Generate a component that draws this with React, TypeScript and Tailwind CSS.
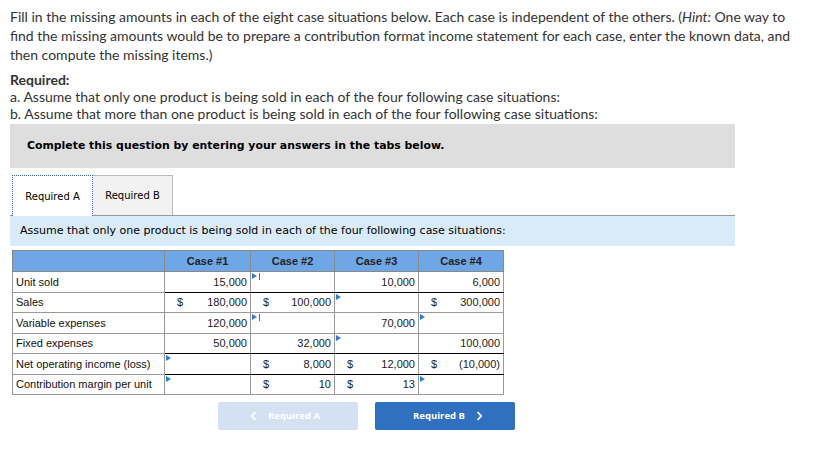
import React from "react";

type Cell = { v?: string; d?: boolean; m?: "flag" | "bar" };

const rows: { label: string; cells: Cell[]; line: string }[] = [
  { label: "Unit sold", cells: [{ v: "15,000" }, { m: "bar" }, { v: "10,000" }, { v: "6,000" }], line: "border-b-black" },
  { label: "Sales", cells: [{ v: "180,000", d: true }, { v: "100,000", d: true }, { m: "flag" }, { v: "300,000", d: true }], line: "border-b-[#9a9a9a]" },
  { label: "Variable expenses", cells: [{ v: "120,000" }, { m: "bar" }, { v: "70,000" }, { m: "flag" }], line: "border-b-[#9a9a9a]" },
  { label: "Fixed expenses", cells: [{ v: "50,000" }, { v: "32,000" }, { m: "flag" }, { v: "100,000" }], line: "border-b-black" },
  { label: "Net operating income (loss)", cells: [{ m: "flag" }, { v: "8,000", d: true }, { v: "12,000", d: true }, { v: "(10,000)", d: true }], line: "border-b-black" },
  { label: "Contribution margin per unit", cells: [{ m: "flag" }, { v: "10", d: true }, { v: "13", d: true }, { m: "flag" }], line: "border-b-[#9a9a9a]" },
];

function Marker({ kind }: { kind: "flag" | "bar" }) {
  return (
    <svg className="absolute left-0 top-0" width="10" height="9" viewBox="0 0 10 9">
      <path d="M1 1 L6 4 L1 7 Z" fill="#2f7bd8" />
      {kind === "bar" && <rect x="8" y="1" width="1" height="7" fill="#2f7bd8" />}
    </svg>
  );
}

function Chevron({ dir }: { dir: "left" | "right" }) {
  return (
    <svg width="7" height="10" viewBox="0 0 7 10">
      <path d={dir === "left" ? "M5.5 1 L1.8 5 L5.5 9" : "M1.5 1 L5.2 5 L1.5 9"} fill="none" stroke="white" strokeWidth="1.8" />
    </svg>
  );
}

export default function App() {
  return (
    <div className="w-[813px] h-[450px] bg-white text-[#333] relative">
      <div className="px-[10px] pt-[7px] font-['Lato',sans-serif] text-[14px] leading-[19px] text-[#333]">
        <p>
          Fill in the missing amounts in each of the eight case situations below. Each case is independent of the others. (<i>Hint:</i> One way to find the missing amounts would be to prepare a contribution format income statement for each case, enter the known data, and then compute the missing items.)
        </p>
        <p className="mt-[7px] font-bold leading-[17px]">Required:</p>
        <p className="leading-[17px]">a. Assume that only one product is being sold in each of the four following case situations:</p>
        <p className="leading-[17px]">b. Assume that more than one product is being sold in each of the four following case situations:</p>
      </div>

      <div className="ml-[10px] mt-[2px] w-[725px] h-[44px] bg-[#dedede] flex items-center px-[17px] font-['DejaVu_Sans',Verdana,sans-serif] text-[10.9px] font-bold text-black">
        Complete this question by entering your answers in the tabs below.
      </div>

      <div className="ml-[10px] mt-[7px] w-[725px] flex items-end border-b border-[#999] h-[41px] font-['DejaVu_Sans',Verdana,sans-serif] text-[10px] text-black">
        <div className="ml-[2px] w-[81px] h-[41px] -mb-px bg-white border border-dotted border-[#3a5fa8] border-b-0 flex items-center justify-center">
          Required A
        </div>
        <div className="w-[80px] h-[40px] bg-[#f2f2f2] border border-[#bbb] border-b-0 border-l-0 flex items-center justify-center">
          Required B
        </div>
      </div>

      <div className="ml-[10px] w-[725px] h-[30px] bg-[#d9ebf9] flex items-center px-[10px] font-['DejaVu_Sans',Verdana,sans-serif] text-[11px] text-black">
        Assume that only one product is being sold in each of the four following case situations:
      </div>

      <table className="ml-[12px] mt-[4px] border-collapse font-['Liberation_Sans',Arial,sans-serif] text-[11px] text-black">
        <thead>
          <tr className="h-[21px] bg-[#6fa7e6]">
            <th className="w-[152px] border border-[#888]"></th>
            {["Case #1", "Case #2", "Case #3", "Case #4"].map((c, i) => (
              <th key={c} className={`${i === 3 ? "w-[85px]" : i === 0 ? "w-[86px]" : "w-[84px]"} border border-[#888] font-bold text-[#222]`}>
                {c}
              </th>
            ))}
          </tr>
        </thead>
        <tbody>
          {rows.map((r) => (
            <tr key={r.label} className="h-[20.5px]">
              <td className="border border-[#999] pl-[3px] text-[#111]">{r.label}</td>
              {r.cells.map((c, i) => (
                <td key={i} className={`relative border border-[#999] ${r.line} p-0`}>
                  {c.m && <Marker kind={c.m} />}
                  <div className="flex justify-between items-center pl-[12px] pr-[3px] text-[#222]">
                    <span>{c.d ? "$" : ""}</span>
                    <span>{c.v ?? ""}</span>
                  </div>
                </td>
              ))}
            </tr>
          ))}
        </tbody>
      </table>

      <div className="flex gap-[17px] ml-[218px] mt-[7px] font-['Open_Sans',sans-serif] text-[9.5px] font-bold text-white">
        <div className="w-[140px] h-[28px] rounded-[2px] bg-[#d3e1f3] flex items-center justify-center gap-[11px] pr-[6px]">
          <Chevron dir="left" />
          <span>Required A</span>
        </div>
        <div className="w-[140px] h-[28px] rounded-[2px] bg-[#2f70c1] flex items-center justify-center gap-[11px] pl-[6px]">
          <span>Required B</span>
          <Chevron dir="right" />
        </div>
      </div>
    </div>
  );
}
